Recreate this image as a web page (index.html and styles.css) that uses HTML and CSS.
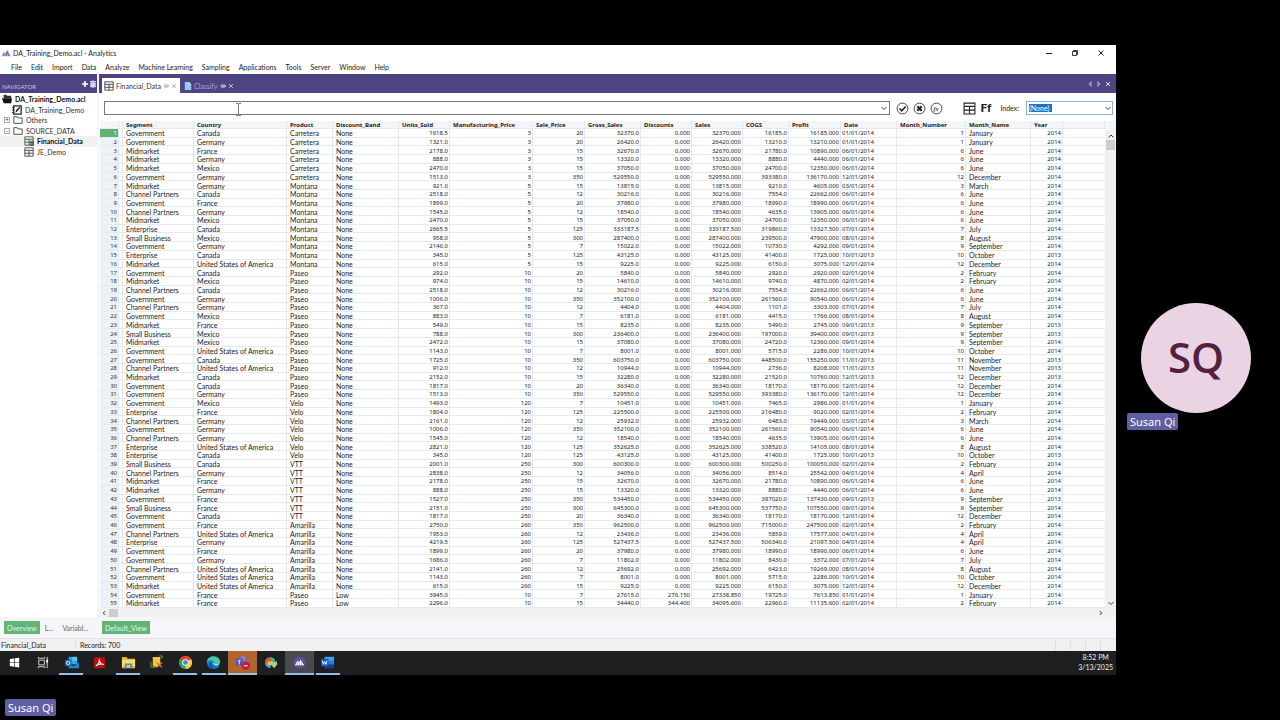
FILE: index.html
```html
<!DOCTYPE html>
<html lang="en">
<head>
<meta charset="utf-8">
<title>DA_Training_Demo.acl - Analytics</title>
<link rel="stylesheet" href="styles.css">
</head>
<body>
<svg class="defs" aria-hidden="true">
  <symbol id="i-table" viewBox="0 0 12 12"><path d="M1 1h10v10H1zM1 4h10M1 7.500h10M6 4v7" fill="none" stroke="currentColor"/></symbol>
  <symbol id="i-folder" viewBox="0 0 12 12"><path d="M1 2h4l1 1.500h5V10H1z" fill="none" stroke="currentColor"/></symbol>
  <symbol id="i-pin" viewBox="0 0 12 12"><path d="M0 6h4M4.500 2v8M4.500 4h6v4h-6M4.500 7h6" fill="none" stroke="currentColor" stroke-width="1.600"/></symbol>
  <symbol id="i-x" viewBox="0 0 12 12"><path d="M2 2l8 8M10 2l-8 8" fill="none" stroke="currentColor" stroke-width="1.600"/></symbol>
  <symbol id="i-down" viewBox="0 0 12 12"><path d="M1 4l5 5 5-5" fill="none" stroke="currentColor" stroke-width="1.700"/></symbol>
  <symbol id="i-logo" viewBox="0 0 24 18"><path d="M1 17L7 6l3 5 5-10 8 16zM4 17v-4M8 17v-6M12 17v-5M16 17v-7" fill="#6b63a5" stroke="#fff"/></symbol>
</svg>
<div class="meeting">
  <div class="share">
    <main class="app">
      <header class="titlebar">
        <svg class="logo"><use href="#i-logo"/></svg>
        <h1>DA_Training_Demo.acl - Analytics</h1>
        <button aria-label="Minimize"><svg class="ic8" viewBox="0 0 8 8"><path d="M1 4.500h6" stroke="#222"/></svg></button>
        <button aria-label="Restore"><svg class="ic8" viewBox="0 0 8 8"><path d="M1.500 2.500h4v4h-4zM2.500 2.500v-1h4v4h-1" fill="none" stroke="#222" stroke-width=".9"/></svg></button>
        <button aria-label="Close"><svg class="ic8" viewBox="0 0 8 8"><path d="M1.500 1.500l5 5M6.500 1.500l-5 5" stroke="#222"/></svg></button>
      </header>
      <nav class="menu">
        <button>File</button><button>Edit</button><button>Import</button><button>Data</button><button>Analyze</button><button>Machine Learning</button><button>Sampling</button><button>Applications</button><button>Tools</button><button>Server</button><button>Window</button><button>Help</button>
      </nav>
      <div class="work">
        <aside class="navigator">
          <div class="navhead"><h2>NAVIGATOR</h2>
            <button aria-label="Add"><svg class="ic8" viewBox="0 0 8 8"><path d="M4 1v6M1 4h6" stroke="#fff" stroke-width="1.600"/></svg></button>
            <button aria-label="Delete"><svg class="ic8" viewBox="0 0 8 8"><path d="M1 1.500h6M3 1h2M1.800 2.800h4.400V7H1.800z" fill="#d8d5ee" stroke="#d8d5ee"/></svg></button>
          </div>
          <ul class="tree">
            <li class="strong root"><svg class="ic10" viewBox="0 0 12 12"><path d="M2 5V1h3l1 1h5v3z" fill="#333"/><path d="M0 5h12l-1 6H2z" fill="#111"/></svg>DA_Training_Demo.acl</li>
            <li class="l1"><svg class="ic10" viewBox="0 0 12 12"><path d="M2 1h9v10H2z" fill="#fff" stroke="#222" stroke-width="1.500"/><path d="M0 3h3M0 6h3M0 9h3" stroke="#222"/><path d="M4 9l1-3 4-4 1 1-4 5z" fill="#222"/></svg>DA_Training_Demo</li>
            <li class="l0"><span class="box">+</span><svg class="ic10"><use href="#i-folder"/></svg>Others</li>
            <li class="l0"><span class="box">−</span><svg class="ic10"><use href="#i-folder"/></svg>SOURCE_DATA</li>
            <li class="l2 strong picked"><svg class="ic10" viewBox="0 0 12 12"><path d="M7 6h5v6H7z" fill="#48aa5d"/><path d="M1 1h10v10H1zM1 4h10M1 7.500h10M6 4v7" fill="none" stroke="#444"/></svg>Financial_Data</li>
            <li class="l2"><svg class="ic10"><use href="#i-table"/></svg>JE_Demo</li>
          </ul>
        </aside>
        <section class="view">
          <div class="tabs">
            <div class="tab on"><svg class="ic10"><use href="#i-table"/></svg><span>Financial_Data</span><svg class="ic6"><use href="#i-pin"/></svg><svg class="ic6"><use href="#i-x"/></svg></div>
            <div class="tab"><svg class="ic8" viewBox="0 0 8 10"><path d="M0 0h5l3 3v7H0z" fill="#9cc6f0"/><path d="M5 0v3h3" fill="#e8f3ff"/></svg><span>Classify</span><svg class="ic6 pale"><use href="#i-pin"/></svg><svg class="ic6 pale"><use href="#i-x"/></svg></div>
            <div class="tabnav">
              <svg class="ic6" viewBox="0 0 8 8"><path d="M5.500 1L2.500 4l3 3z" fill="none" stroke="#d9d6ee"/></svg>
              <svg class="ic6" viewBox="0 0 8 8"><path d="M2.500 1l3 3-3 3z" fill="none" stroke="#d9d6ee"/></svg>
              <svg class="ic6 white"><use href="#i-x"/></svg>
            </div>
          </div>
          <div class="filter">
            <div class="combo wide"><input aria-label="Filter expression"><button aria-label="Open"><svg class="ic6"><use href="#i-down"/></svg></button></div>
            <button aria-label="Apply"><svg class="ic13" viewBox="0 0 13 13"><circle cx="6.500" cy="6.500" r="5.400" fill="none" stroke="#444"/><path d="M3.500 6.500l2.200 2.300 4-4.300" fill="none" stroke="#222" stroke-width="1.700"/></svg></button>
            <button aria-label="Clear"><svg class="ic13" viewBox="0 0 13 13"><circle cx="6.500" cy="6.500" r="5.400" fill="none" stroke="#444"/><path d="M4.300 4.300l4.400 4.400M8.700 4.300l-4.400 4.400" stroke="#222" stroke-width="2.200"/></svg></button>
            <button aria-label="Function"><svg class="ic13" viewBox="0 0 13 13"><circle cx="6.500" cy="6.500" r="5.400" fill="none" stroke="#444"/><text x="3.500" y="8.500" class="fx">fx</text></svg></button>
            <button class="grid" aria-label="Grid"><svg class="ic13"><use href="#i-table"/></svg></button>
            <button class="ff">Ff</button>
            <label for="idx">Index:</label>
            <div class="combo index"><input id="idx" value="(None)"><button aria-label="Open index"><svg class="ic6"><use href="#i-down"/></svg></button></div>
          </div>
          <div class="sheet">
            <div class="rows">
              <table>
                <colgroup><col class="w-no"><col class="w-gap"><col class="w-seg"><col class="w-cty"><col class="w-46"><col class="w-66"><col class="w-51"><col class="w-83"><col class="w-52"><col class="w-56"><col class="w-51"><col class="w-51"><col class="w-46"><col class="w-52"><col class="w-56"><col class="w-69"><col class="w-65"><col class="w-32"><col></colgroup>
                <thead><tr><th></th><th></th><th>Segment</th><th>Country</th><th>Product</th><th>Discount_Band</th><th>Units_Sold</th><th>Manufacturing_Price</th><th>Sale_Price</th><th>Gross_Sales</th><th>Discounts</th><th>Sales</th><th>COGS</th><th>Profit</th><th>Date</th><th>Month_Number</th><th>Month_Name</th><th>Year</th><th></th></tr></thead>
                <tbody id="data"></tbody>
              </table>
            </div>
            <div class="vbar"><svg class="ic6" viewBox="0 0 12 12"><path d="M1 9l5-5 5 5" fill="none" stroke="#333" stroke-width="2"/></svg><i></i><svg class="ic6 last"><use href="#i-down"/></svg></div>
          </div>
          <div class="hbar"><svg class="ic6" viewBox="0 0 8 8"><path d="M5.500 1.500L3 4l2.500 2.500" fill="none" stroke="#333" stroke-width="1.300"/></svg><i></i><svg class="ic6 last" viewBox="0 0 8 8"><path d="M2.500 1.500L5 4 2.500 6.500" fill="none" stroke="#333" stroke-width="1.300"/></svg></div>
          <svg class="ibeam" viewBox="0 0 7 13"><path d="M1 .5h2l.5.5.5-.5h2M3.500 1v11M1 12.500h2l.5-.5.5.5h2" fill="none" stroke="#777"/></svg>
        </section>
      </div>
      <div class="bottomtabs">
        <div class="left"><button class="green">Overview</button><button>L...</button><button>Variabl...</button></div>
        <button class="green">Default_View</button>
      </div>
      <footer class="status"><span class="name">Financial_Data</span><span class="records">Records: 700</span><span class="cells"><i></i><i></i><i></i><i></i></span></footer>
    </main>
    <nav class="taskbar">
      <div class="apps">
        <button aria-label="Start"><svg viewBox="0 0 16 16"><path d="M3 4.300l4.500-.7v4H3zM8.200 3.500L13 2.800v4.800H8.200zM3 8.300h4.500v4.100L3 11.700zM8.200 8.300H13v4.900l-4.800-.7z" fill="#fff"/></svg></button>
        <button aria-label="Task View"><svg viewBox="0 0 16 16"><path d="M4 5.500h6v5H4zM3.500 2v1.500h7V2M3.500 14v-1.500h7V14M13 2v12" fill="none" stroke="#ddd"/><path d="M12 5h2v3h-2z" fill="#fff"/></svg></button>
        <button class="run" aria-label="Outlook"><svg viewBox="0 0 16 16"><path d="M5 2h9v8H5z" fill="#30a8e6"/><path d="M9 2h5v4H9z" fill="#52cdf7"/><path d="M4 8l6 4 6-4v6H5z" fill="#1d82d2"/><path d="M1 5h7v7H1z" fill="#0f64b5"/><circle cx="4.500" cy="8.500" r="1.800" fill="none" stroke="#fff"/></svg></button>
        <button aria-label="Acrobat"><svg viewBox="0 0 16 16"><rect x="2" y="2" width="12" height="12" rx="2" fill="#b90c0c"/><path d="M4 11.500c3-1.500 4-4 3.700-7 .5 4 2 5.500 4.800 5.500-3-.7-6 0-8.500 1.500z" fill="none" stroke="#fff" stroke-width="1.100"/></svg></button>
        <button class="run" aria-label="File Explorer"><svg viewBox="0 0 16 16"><path d="M1 2h5l1 2h8v10H1z" fill="#eeb537"/><path d="M1 5h14v7H1z" fill="#ffdb70"/><path d="M4 14V9h8v5h-2v-3H6v3z" fill="#3394df"/></svg></button>
        <button aria-label="Snip"><svg viewBox="0 0 16 16"><path d="M4 2h8v8l-3 3-5-1z" fill="#f2c542"/><path d="M2 7v6h5M11 1h3v3" fill="none" stroke="#6fa34a"/><path d="M8 8l6 5M14 8l-6 5" stroke="#de7d27" stroke-width="1.400"/></svg></button>
        <button class="run" aria-label="Chrome"><svg viewBox="0 0 16 16"><circle cx="8" cy="8" r="7" fill="#2fa651"/><path d="M8 8L1.900 4.500A7 7 0 0 1 14.100 4.500z" fill="#e5412f"/><path d="M8 8l6.100-3.500A7 7 0 0 1 8 15z" fill="#fbcb2c"/><circle cx="8" cy="8" r="3.500" fill="#fff"/><circle cx="8" cy="8" r="2.600" fill="#4285f4"/></svg></button>
        <button class="run" aria-label="Edge"><svg viewBox="0 0 16 16"><circle cx="8" cy="8" r="7" fill="#1681ce"/><path d="M1 7C2 1 12-1 15 6c1 4-3 5-6 4 2-4-4-6-8-3z" fill="#45cc9b"/><path d="M6 8c-1 4 2 6 6 5-4 3-9 1-9-2s2-4 3-3z" fill="#0b509e"/><path d="M8 8c0 2 2 3 5 2" stroke="#e8f6ff" fill="none"/></svg></button>
        <button class="alert" aria-label="Teams"><svg viewBox="0 0 16 16"><circle cx="9" cy="3.500" r="2.500" fill="#7b83eb"/><path d="M6 6h9v6H6z" fill="#6a72d6"/><path d="M1 4h7v7H1z" fill="#4a53bb"/><path d="M3 6h3M4.500 6v4" stroke="#fff"/><circle cx="11.500" cy="11.500" r="4.300" fill="#c6173a"/><path d="M9.500 11.500h4" stroke="#fff" stroke-width="1.200"/></svg></button>
        <button aria-label="Monitor"><svg viewBox="0 0 16 16"><path d="M8 8V2a6 6 0 0 0-6 6z" fill="#e85745"/><path d="M8 8V2a6 6 0 0 1 5 4z" fill="#5bb76b"/><path d="M8 8H2a6 6 0 0 0 6 6z" fill="#47a0dd"/><path d="M8 7h7v3l-3 4-3-3z" fill="#a7cf82"/><path d="M5 7h4v4H5z" fill="#f5c14d"/></svg></button>
        <button class="active run" aria-label="Analytics"><svg viewBox="0 0 16 16"><circle cx="8" cy="8" r="6.500" fill="#5c529b"/><path d="M3 11l3-5 1.500 2L9 5l4 6z" fill="#fff"/><path d="M6 11V8.500M8 11V8M10 11V8" stroke="#8d86c0" stroke-width=".7"/></svg></button>
        <button class="run" aria-label="Word"><svg viewBox="0 0 16 16"><path d="M5 2h10v12H5z" fill="#2b7cd3"/><path d="M5 2h10v4H5z" fill="#41a5ee"/><path d="M5 10h10v4H5z" fill="#103f91"/><path d="M1 4h8v8H1z" fill="#185abd"/><path d="M2.500 6l1.200 4L5 7l1.300 3 1.200-4" fill="none" stroke="#fff"/></svg></button>
      </div>
      <div class="clock"><time>8:52 PM</time><time>3/13/2025</time></div>
    </nav>
    <div class="presenter"><span class="nametag">Susan Qi</span></div>
  </div>
  <aside class="people">
    <div class="avatar">SQ</div>
    <span class="nametag">Susan Qi</span>
  </aside>
</div>
<script src="data.js"></script>
</body>
</html>
```
FILE: styles.css
```css
* { box-sizing: border-box; }
body { margin: 0; background: #000; font-family: Lato, "Noto Sans", sans-serif; font-size: 7px; line-height: 8px; color: #222; }
button, input { font: inherit; color: inherit; border: 0; background: none; padding: 0; margin: 0; }
button { display: flex; align-items: center; justify-content: center; }
h1, h2 { font-size: 7px; font-weight: 400; margin: 0; }
svg { display: block; flex: none; }
.defs { position: absolute; width: 0; height: 0; }
.ic6 { width: 6px; height: 6px; }
.ic8 { width: 8px; height: 8px; }
.ic10 { width: 10px; height: 10px; }
.ic13 { width: 13px; height: 13px; }
.white { color: #fff; }
.pale { color: #d5d1ea; }

.meeting { display: grid; grid-template-columns: 1fr 164px; height: 100vh; }
.share { display: flex; flex-direction: column; padding-top: 45px; min-width: 0; min-height: 0; }
.app { flex: 1; display: flex; flex-direction: column; min-height: 0; background: #fff; }

.titlebar { display: flex; align-items: center; height: 15px; padding-right: 11px; gap: 18px; }
.titlebar h1 { flex: 1; margin-left: -16px; }
.logo { width: 10px; height: 8px; margin-left: 1px; }
.menu { display: flex; gap: 9px; height: 14px; padding-left: 11px; align-items: center; }

.work { flex: 1; display: flex; min-height: 0; gap: 2px; background: #f4f6f9; }
.navigator { width: 97px; background: #fff; }
.navhead { display: flex; align-items: center; height: 19px; padding-left: 2px; background: #4e4482; color: #c9c5df; }
.navhead h2 { flex: 1; padding-top: 6px; font-size: 6px; }
.tree { list-style: none; margin: 1px 0 0; padding: 0; display: grid; grid-template-rows: repeat(6, 1fr); height: 63px; color: #333; }
.tree li { display: flex; align-items: center; gap: 3px; }
.tree .root { padding-left: 2px; }
.tree .l1 { padding-left: 12px; }
.tree .l0 { padding-left: 4px; }
.tree .l2 { padding-left: 24px; }
.strong { font-weight: 700; color: #111; }
.tree .picked { background: #f1f1f1; }
.box { width: 6px; height: 6px; border: 1px solid #aaa; font-size: 6px; line-height: 4px; text-align: center; }

.view { position: relative; flex: 1; display: flex; flex-direction: column; min-width: 0; }
.tabs { display: flex; align-items: flex-end; height: 19px; padding-left: 3px; background: #4e4482; }
.tab { display: flex; align-items: center; gap: 2px; height: 15px; padding: 0 4px; color: #aaa4cf; }
.tab.on { background: #fff; color: #333; padding: 0 3px 0 2px; }
.tab.on .ic6 { color: #aaa; }
.tabnav { display: flex; gap: 3px; margin-left: auto; padding: 0 5px 6px 0; }
.filter { display: flex; align-items: center; height: 28px; padding: 2px 3px 0 5px; background: #fff; }
.combo { display: flex; height: 14px; border: 1px solid #777; }
.combo input { min-width: 0; outline: 0; }
.combo button { width: 9px; }
.wide { flex: 1; margin-right: 6px; }
.wide input { flex: 1; }
.filter > button { margin-right: 4px; }
.fx { font: italic 700 6px "Liberation Serif", serif; fill: #333; }
.filter > .grid { margin: 0 5px 0 16px; }
.filter > .ff { font: 900 12px/14px Lato, sans-serif; margin-right: 9px; }
.filter label { margin-right: 7px; }
.index { width: 87px; padding: 2px 0 2px 2px; justify-content: space-between; border-color: #8ab4dd; }
.index input { width: 23px; background: #1a72cc; color: #fff; }

.sheet { flex: 1; display: flex; min-height: 0; }
.rows { flex: 1; min-width: 0; padding-left: 1px; overflow: hidden; background: #fff; }
table { width: 100%; height: 100%; table-layout: fixed; border-collapse: separate; border-spacing: 0; }
th, td { padding: 1px 0 0 3px; line-height: 6px; white-space: nowrap; overflow: visible; border-right: 1px solid #e3e8ee; border-bottom: 1px solid #e6eaf0; text-align: left; font-weight: 400; vertical-align: middle; }
thead th { font-family: "Noto Sans", sans-serif; font-size: 6px; font-weight: 700; color: #222; background: #f4f5f8; }
.num { font-family: "Noto Sans", sans-serif; font-size: 6px; text-align: right; padding: 1px 1px 0; }
.date { text-align: left; }
tbody th { background: #edf2f6; color: #333; }
tbody tr:first-child th { background: #5fb272; color: #fff; }
td:last-child { border-right: 0; }
.w-no { width: 19px; } .w-gap { width: 4px; } .w-seg { width: 71px; } .w-cty { width: 93px; }
.w-32 { width: 32px; } .w-46 { width: 46px; } .w-51 { width: 51px; } .w-52 { width: 52px; } .w-56 { width: 56px; }
.w-65 { width: 65px; } .w-66 { width: 66px; } .w-69 { width: 69px; } .w-83 { width: 83px; }
.vbar { display: flex; flex-direction: column; align-items: center; width: 11px; padding: 12px 0 2px; background: linear-gradient(#f4f5f8 9px, #f0f0f0 9px); }
.vbar i { width: 9px; height: 10px; margin-top: 1px; background: #cdcdcd; }
.vbar .last { margin-top: auto; }
.hbar { display: flex; align-items: center; height: 9px; padding: 0 12px 0 2px; background: #f0f0f0; }
.hbar i { width: 9px; height: 8px; margin-left: 2px; background: #cdcdcd; }
.hbar .last { margin-left: auto; }
.ibeam { position: absolute; left: 136px; top: 29px; width: 7px; height: 13px; }

.bottomtabs { display: flex; align-items: center; height: 21px; background: #f4f6f9; color: #666; }
.bottomtabs .left { display: flex; width: 102px; padding-left: 4px; gap: 5px; }
.bottomtabs .left button:last-child { margin-left: 4px; }
.green { height: 13px; padding: 0 3px; background: #62b374; color: #e9f7ec; }
.status { display: flex; align-items: center; height: 13px; background: #f0f0f0; border-top: 1px solid #e2e2e2; }
.status .name { width: 76px; padding-left: 1px; border-right: 1px solid #ddd; }
.status .records { padding-left: 4px; }
.cells { display: flex; margin-left: auto; padding-right: 15px; gap: 14px; }
.cells i { width: 1px; height: 9px; background: #ddd; }

.taskbar { display: flex; justify-content: space-between; height: 24px; background: #1e1f20; }
.apps { display: grid; grid-template-columns: repeat(12, 1fr); width: 342px; }
.apps button { border-bottom: 2px solid transparent; padding-top: 1px; }
.apps svg { width: 15px; height: 15px; }
.apps .run { background: linear-gradient(#8fc1e8, #8fc1e8) center bottom / 24px 2px no-repeat border-box; }
.apps .alert { background: #b1652c; border-bottom-color: #9fc4e3; }
.apps .active { background: #484a4d; border-bottom-color: #8fc1e8; }
.clock { display: flex; flex-direction: column; justify-content: center; gap: 2px; padding: 0 3px 2px 0; text-align: center; color: #eee; }
.presenter { height: 45px; padding: 24px 0 0 5px; }
.nametag { display: inline-block; padding: 0 3px; border-radius: 2px; background: #5f5fa3; color: #fff; font: 11px/17px "Noto Sans", sans-serif; }
.people { padding: 303px 0 0 11px; }
.avatar { display: flex; align-items: center; justify-content: center; width: 110px; height: 110px; padding-bottom: 3px; margin-left: 14px; border-radius: 50%; background: #ead3e2; color: #53203f; font: 600 42px "Open Sans", sans-serif; }
```
FILE: data.js
```js
// segment, country, product, units, sale price, COGS, month, year, discount
const segments = { G: "Government", M: "Midmarket", C: "Channel Partners", E: "Enterprise", S: "Small Business" };
const countries = { C: "Canada", G: "Germany", F: "France", M: "Mexico", U: "United States of America" };
const products = { C: ["Carretera", 3], M: ["Montana", 5], P: ["Paseo", 10], V: ["Velo", 120], T: ["VTT", 250], A: ["Amarilla", 260] };
const months = ["January", "February", "March", "April", "May", "June", "July", "August", "September", "October", "November", "December"];
const records = `GCC 1618.5 20 16185 1 2014
GGC 1321 20 13210 1 2014
MFC 2178 15 21780 6 2014
MGC 888 15 8880 6 2014
MMC 2470 15 24700 6 2014
GGC 1513 350 393380 12 2014
MGM 921 15 9210 3 2014
CCM 2518 12 7554 6 2014
GFM 1899 20 18990 6 2014
CGM 1545 12 4635 6 2014
MMM 2470 15 24700 6 2014
ECM 2665.5 125 319860 7 2014
SMM 958 300 239500 8 2014
GGM 2146 7 10730 9 2014
ECM 345 125 41400 10 2013
MUM 615 15 6150 12 2014
GCP 292 20 2920 2 2014
MMP 974 15 9740 2 2014
CCP 2518 12 7554 6 2014
GGP 1006 350 261560 6 2014
CGP 367 12 1101 7 2014
GMP 883 7 4415 8 2014
MFP 549 15 5490 9 2013
SMP 788 300 197000 9 2013
MMP 2472 15 24720 9 2014
GUP 1143 7 5715 10 2014
GCP 1725 350 448500 11 2013
CUP 912 12 2736 11 2013
MCP 2152 15 21520 12 2013
GCP 1817 20 18170 12 2014
GGP 1513 350 393380 12 2014
GMV 1493 7 7465 1 2014
EFV 1804 125 216480 2 2014
CGV 2161 12 6483 3 2014
GGV 1006 350 261560 6 2014
CGV 1545 12 4635 6 2014
EUV 2821 125 338520 8 2014
ECV 345 125 41400 10 2013
SCT 2001 300 500250 2 2014
CGT 2838 12 8514 4 2014
MFT 2178 15 21780 6 2014
MGT 888 15 8880 6 2014
GFT 1527 350 397020 9 2013
SFT 2151 300 537750 9 2014
GCT 1817 20 18170 12 2014
GFA 2750 350 715000 2 2014
CUA 1953 12 5859 4 2014
EGA 4219.5 125 506340 4 2014
GFA 1899 20 18990 6 2014
GGA 1686 7 8430 7 2014
CUA 2141 12 6423 8 2014
GUA 1143 7 5715 10 2014
MUA 615 15 6150 12 2014
GFP 3945 7 19725 1 2014 276.15
MFP 2296 15 22960 2 2014 344.4`.split("\n");

document.getElementById("data").innerHTML = records.map((line, i) => {
  const [key, units, price, cogs, month, year, discount = 0] = line.split(" ");
  const [product, cost] = products[key[2]];
  const gross = units * price;
  const sales = gross - discount;
  const text = v => `<td>${v}</td>`;
  const num = v => `<td class="num">${v}</td>`;
  return `<tr><th class="num">${i + 1}</th><td></td>` +
    text(segments[key[0]]) + text(countries[key[1]]) + text(product) + text(discount ? "Low" : "None") +
    num((+units).toFixed(1)) + num(cost) + num(price) + num(gross.toFixed(1)) + num((+discount).toFixed(3)) +
    num(sales.toFixed(3)) + num((+cogs).toFixed(1)) + num((sales - cogs).toFixed(3)) +
    `<td class="num date">${month.padStart(2, "0")}/01/${year}</td>` +
    num(month) + text(months[month - 1]) + num(year) + "<td></td></tr>";
}).join("");
```
